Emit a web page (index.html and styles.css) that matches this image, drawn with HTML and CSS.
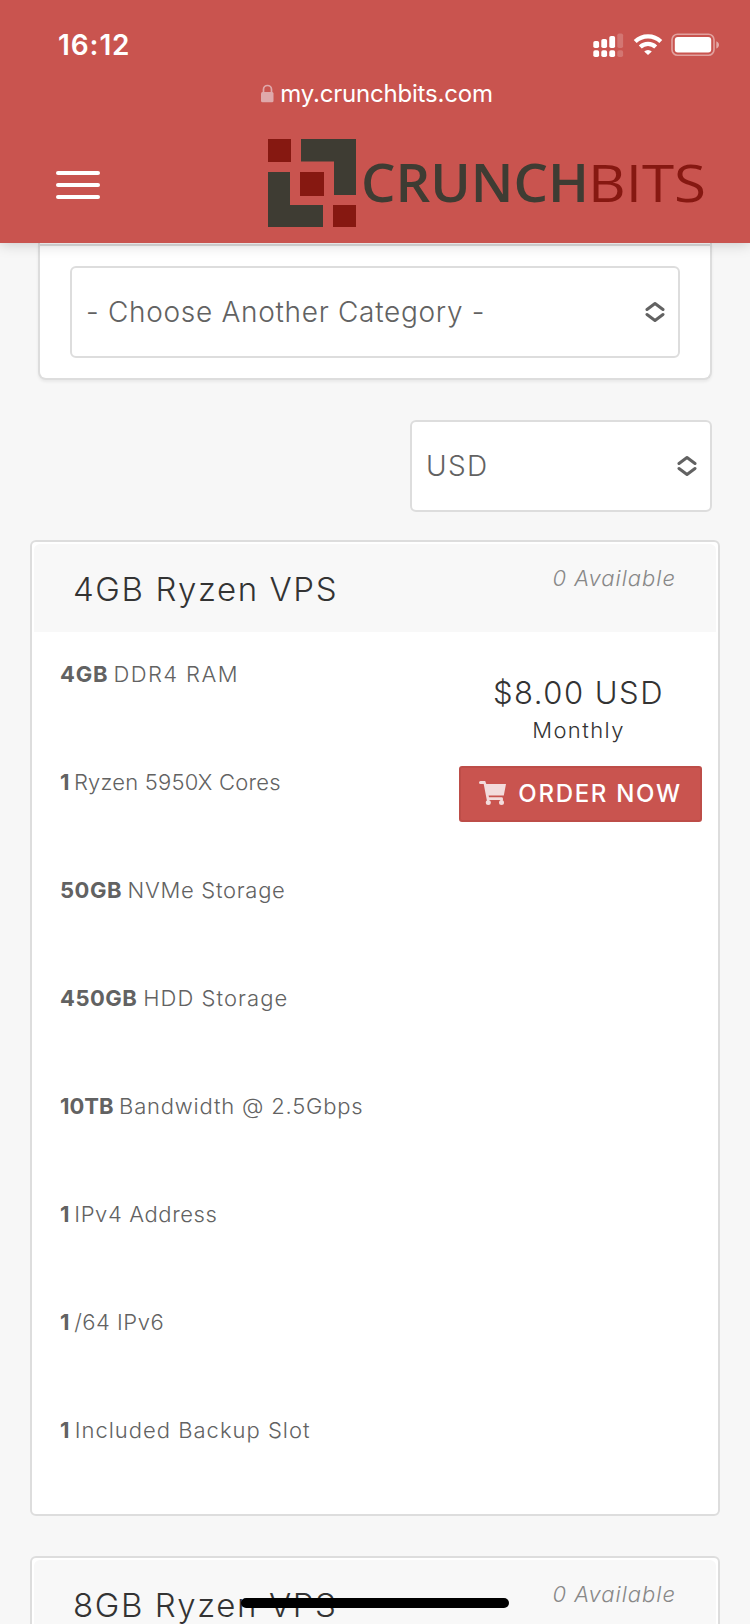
FILE: index.html
```html
<!DOCTYPE html>
<html lang="en">
<head>
  <meta charset="UTF-8" />
  <meta name="viewport" content="width=device-width, initial-scale=1.0"/>
  <title>Ryzen VPS - Crunchbits</title>
  <link rel="stylesheet" href="styles.css">
</head>
<body>
  <header class="header">
    <div class="status-bar">
      <span class="time">16:12</span>
      <svg class="status-icons" width="128" height="28" viewBox="592 31 128 28" fill="#fff">
        <!-- signal -->
        <rect x="593.3" y="41" width="5.8" height="7" rx="1.8"/>
        <rect x="601.3" y="39" width="5.8" height="9" rx="1.8"/>
        <rect x="609.3" y="36" width="5.8" height="12" rx="1.8"/>
        <rect x="617.3" y="33.5" width="5.8" height="14.5" rx="1.8" opacity=".2"/>
        <rect x="593.3" y="50.3" width="5.8" height="6.7" rx="1.8"/>
        <rect x="601.3" y="50.3" width="5.8" height="6.7" rx="1.8"/>
        <rect x="609.3" y="50.3" width="5.8" height="6.7" rx="1.8"/>
        <rect x="617.3" y="50.3" width="5.8" height="6.7" rx="1.8" opacity=".2"/>
        <!-- wifi -->
        <g fill="none" stroke="#fff" stroke-width="4.2">
          <path d="M635.2 41.500a18.500 18.500 0 0 1 25.600 0"/>
          <path d="M640.3 47a11 11 0 0 1 15.400 0"/>
        </g>
        <path d="M648 55l-3.8-3.600a5.500 5.500 0 0 1 7.600 0z"/>
        <!-- battery -->
        <rect x="672" y="34.3" width="42" height="21" rx="5.5" fill="none" stroke="#fff" stroke-width="1.6" opacity=".45"/>
        <rect x="674.8" y="37" width="36.4" height="15.6" rx="3"/>
        <path d="M716.3 41.300c3.600 1.300 3.600 6 0 7.300z" opacity=".5"/>
      </svg>
    </div>
    <div class="address">
      <svg width="13" height="19" viewBox="0 0 13 19">
        <path d="M2.500 9V5.500a4 4 0 0 1 8 0V9" fill="none" stroke="#dfa9ab" stroke-width="1.700"/>
        <rect x="0" y="8" width="12.500" height="10.300" rx="1.500" fill="#dfa9ab"/>
      </svg>
      <span>my.crunchbits.com</span>
    </div>
    <div class="navbar">
      <div class="menu-btn"><i></i><i></i><i></i></div>
      <svg class="logo" width="440" height="88" viewBox="0 0 440 88">
        <g fill="#861811">
          <rect x="0" y="0" width="23" height="23"/>
          <rect x="32" y="33" width="24" height="24"/>
          <rect x="65" y="66" width="23" height="22"/>
        </g>
        <g fill="#3e3c33">
          <path d="M33 0H88V56H66V22.500H33z"/>
          <path d="M0 33H22V66H55V88H0z"/>
        </g>
        <text class="logo-crunch" x="93" y="62.500" textLength="228" lengthAdjust="spacingAndGlyphs">CRUNCH</text>
        <text class="logo-bits" x="320" y="62.500" textLength="118" lengthAdjust="spacingAndGlyphs">BITS</text>
      </svg>
    </div>
  </header>

  <main class="content">
    <div class="panel">
      <div class="select">
        <span>- Choose Another Category -</span>
        <svg class="arrows" width="20" height="22" viewBox="0 0 20 22"><path d="M2 8.500L10 2.500L18 8.500M2 13.500L10 19.500L18 13.500"/></svg>
      </div>
    </div>

    <div class="select currency">
      <span>USD</span>
      <svg class="arrows" width="20" height="22" viewBox="0 0 20 22"><path d="M2 8.500L10 2.500L18 8.500M2 13.500L10 19.500L18 13.500"/></svg>
    </div>

    <section class="product">
      <div class="product-head">
        <h2>4GB Ryzen VPS</h2>
        <span class="qty">0 Available</span>
      </div>
      <div class="product-body">
        <ul class="features">
          <li class="f-ram"><b>4GB</b> DDR4 RAM</li>
          <li class="f-cores"><b>1</b> Ryzen 5950X Cores</li>
          <li class="f-nvme"><b>50GB</b> NVMe Storage</li>
          <li class="f-hdd"><b>450GB</b> HDD Storage</li>
          <li class="f-bw"><b>10TB</b> Bandwidth @ 2.5Gbps</li>
          <li class="f-ipv4"><b>1</b> IPv4 Address</li>
          <li class="f-ipv6"><b>1</b> /64 IPv6</li>
          <li class="f-backup"><b>1</b> Included Backup Slot</li>
        </ul>
        <div class="pricing">
          <div class="price">$8.00 USD</div>
          <div class="cycle">Monthly</div>
          <a class="order-btn">
            <svg width="27" height="25" viewBox="0 0 27 25" fill="#f3dcdc">
              <path d="M1.500 0H6.200L7.300 3H27L24.800 14.500H9.600L10 16.300H22.600a1.300 1.300 0 0 1 1.300 1.300V19H7.800L4.700 3H1.500a1.500 1.500 0 0 1 0-3z"/>
              <circle cx="9.300" cy="21.500" r="2.500"/>
              <circle cx="22.500" cy="21.500" r="2.500"/>
              <path d="M8 17.500h2v3H8zM21.500 17.500h2v3h-2z"/>
            </svg>
            <span>ORDER NOW</span>
          </a>
        </div>
      </div>
    </section>

    <section class="product">
      <div class="product-head">
        <h2>8GB Ryzen VPS</h2>
        <span class="qty">0 Available</span>
      </div>
    </section>
  </main>

  <div class="home-indicator"></div>
</body>
</html>
```

FILE: styles.css
```css
* {
  box-sizing: border-box;
}
body {
  margin: 0;
  font-family: Inter, "Open Sans", sans-serif;
  font-weight: 300;
  background-color: #f7f7f7;
  color: #626262;
}
.header {
  position: relative;
  height: 243px;
  background-color: #c9544f;
  box-shadow: 0 0 14px rgba(0,0,0,0.22);
  color: #fff;
}
.status-bar {
  display: flex;
  justify-content: space-between;
  height: 78px;
  padding: 31px 30px 0 58px;
}
.time {
  font-size: 28px;
  font-weight: 600;
  line-height: 28px;
  letter-spacing: 0.9px;
}
.address {
  display: flex;
  justify-content: center;
  align-items: center;
  gap: 6px;
  height: 31px;
  padding-left: 4px;
  font-size: 24px;
  font-weight: 400;
  letter-spacing: -0.2px;
}
.navbar {
  display: flex;
  justify-content: space-between;
  padding: 30px 42px 0 56px;
}
.menu-btn {
  display: flex;
  flex-direction: column;
  gap: 8px;
  padding-top: 32px;
}
.menu-btn i {
  width: 44px;
  height: 4px;
  border-radius: 2px;
  background-color: #fff;
}
.logo {
  display: block;
}
.logo text {
  font-family: "Open Sans", sans-serif;
  font-size: 52px;
}
.logo-crunch {
  font-weight: 600;
  fill: #3e3c33;
}
.logo-bits {
  font-weight: 400;
  fill: #861811;
}
.content {
  height: 1381px;
  padding: 0 30px;
  overflow: hidden;
}
.panel {
  margin: 0 8px 40px;
  height: 137px;
  padding: 23px 30px 0;
  background: linear-gradient(#ddd, #ddd) 0 1px / 100% 2px no-repeat #fff;
  border: 2px solid #ddd;
  border-top: none;
  border-radius: 0 0 8px 8px;
  box-shadow: 0 2px 3px rgba(0,0,0,0.06);
}
.select {
  display: flex;
  justify-content: space-between;
  align-items: center;
  height: 92px;
  padding: 0 13px 0 14px;
  background-color: #fff;
  border: 2px solid #ddd;
  border-radius: 6px;
  font-size: 28px;
  letter-spacing: 0.7px;
}
.arrows path {
  fill: none;
  stroke: #626262;
  stroke-width: 3;
  stroke-linecap: round;
  stroke-linejoin: round;
}
.currency {
  width: 302px;
  margin: 0 8px 28px auto;
  letter-spacing: 1.3px;
}
.product {
  height: 976px;
  margin-bottom: 40px;
  padding: 2px;
  background-color: #fff;
  border: 2px solid #ddd;
  border-radius: 6px;
}
.product-head {
  display: flex;
  justify-content: space-between;
  height: 88px;
  padding: 0 40px 0 39px;
  background-color: #f8f8f8;
  border-radius: 6px 6px 0 0;
}
.product-head h2 {
  margin: 0;
  font-size: 33px;
  font-weight: 300;
  line-height: 90px;
  letter-spacing: 1.6px;
  color: #333;
}
.qty {
  padding-top: 20px;
  font-size: 22px;
  line-height: 28px;
  font-style: italic;
  letter-spacing: 1px;
  color: #888;
}
.product-body {
  display: flex;
  justify-content: space-between;
  padding: 28px 14px 0 26px;
}
.features {
  margin: 0;
  padding: 0;
  list-style: none;
  font-size: 22px;
  line-height: 28px;
}
.features li {
  height: 28px;
  margin-bottom: 80px;
}
.features b {
  font-weight: 700;
  letter-spacing: 0.5px;
  margin-right: -2.5px;
}
.features .f-ram {
  letter-spacing: 1.4px;
}
.features .f-ram b {
  letter-spacing: 0.8px;
}
.features .f-cores {
  letter-spacing: 0.2px;
}
.features .f-nvme {
  letter-spacing: 0.7px;
}
.features .f-hdd {
  letter-spacing: 1.05px;
}
.features .f-nvme b,
.features .f-hdd b {
  margin-right: -1.3px;
}
.features .f-bw {
  letter-spacing: 0.8px;
}
.features .f-bw b {
  letter-spacing: 0;
  margin-right: -1.5px;
}
.features .f-ipv4 {
  letter-spacing: 0.6px;
}
.features .f-ipv6 {
  letter-spacing: 0.5px;
}
.features .f-backup {
  letter-spacing: 1px;
}
.pricing {
  width: 243px;
  padding-top: 14px;
  text-align: center;
  color: #333;
}
.price {
  font-size: 31px;
  line-height: 38px;
  letter-spacing: 1.5px;
  margin-right: 4px;
}
.cycle {
  font-size: 22px;
  line-height: 36px;
  letter-spacing: 1.4px;
  margin-right: 4px;
}
.order-btn {
  display: flex;
  align-items: center;
  justify-content: center;
  gap: 12px;
  height: 56px;
  margin-top: 18px;
  padding-bottom: 2px;
  background-color: #c9544f;
  border: 2px solid #bd4d48;
  border-radius: 3px;
  color: #fff;
  font-size: 24px;
  font-weight: 500;
  letter-spacing: 1.7px;
}
.home-indicator {
  position: fixed;
  left: 241px;
  top: 1598px;
  width: 268px;
  height: 10px;
  border-radius: 5px;
  background-color: #000;
}
```
